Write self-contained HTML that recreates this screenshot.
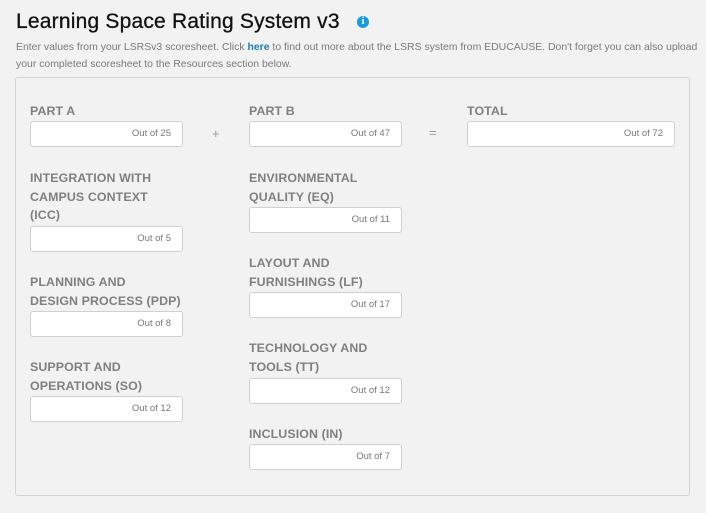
<!DOCTYPE html>
<html><head><meta charset="utf-8"><style>
body{margin:0;width:706px;height:513px;background:#f2f2f2;font-family:"Liberation Sans",sans-serif;position:relative;overflow:hidden}
h1{position:absolute;left:16px;top:10px;margin:0;font-size:21px;font-weight:normal;color:#111;letter-spacing:0.2px;white-space:nowrap;-webkit-text-stroke:0.3px #111}
.info{position:absolute;left:357px;top:16px;width:12px;height:12px;border-radius:50%;background:#1a9be0;color:#fff;font:bold 10px "Liberation Serif",serif;text-align:center;line-height:12px}
.desc{position:absolute;left:16px;top:39px;font-size:10.45px;line-height:17px;color:#7a7a7a;white-space:nowrap}
.desc b{color:#1f7ab8}
.panel{position:absolute;left:15px;top:77px;width:673px;height:417px;border:1px solid #d4d4d4;border-radius:3px}
.l{position:absolute;font-size:12.4px;font-weight:bold;color:#808080;line-height:18.5px;letter-spacing:0.1px;white-space:nowrap}
.i{position:absolute;width:151px;height:24px;background:#fff;border:1px solid #d0d0d0;border-radius:3px;font-size:9.5px;color:#777;text-align:right;line-height:24px;box-sizing:content-box}
.i span{padding-right:11px}
.op{position:absolute;font-size:13px;color:#999}
</style></head><body>
<h1>Learning Space Rating System v3</h1>
<div class="info">i</div>
<div class="desc">Enter values from your LSRSv3 scoresheet. Click <b>here</b> to find out more about the LSRS system from EDUCAUSE. Don't forget you can also upload<br>your completed scoresheet to the Resources section below.</div>
<div class="panel"></div>

<div class="l" style="left:30px;top:102px">PART A</div>
<div class="i" style="left:30px;top:121px"><span>Out of 25</span></div>
<div class="op" style="left:212px;top:126px">+</div>
<div class="l" style="left:249px;top:102px">PART B</div>
<div class="i" style="left:249px;top:121px"><span>Out of 47</span></div>
<div class="op" style="left:429px;top:125px">=</div>
<div class="l" style="left:467px;top:102px">TOTAL</div>
<div class="i" style="left:467px;top:121px;width:206px"><span>Out of 72</span></div>

<div class="l" style="left:30px;top:169px">INTEGRATION WITH<br>CAMPUS CONTEXT<br>(ICC)</div>
<div class="i" style="left:30px;top:226px"><span>Out of 5</span></div>
<div class="l" style="left:30px;top:273px">PLANNING AND<br>DESIGN PROCESS (PDP)</div>
<div class="i" style="left:30px;top:311px"><span>Out of 8</span></div>
<div class="l" style="left:30px;top:358px">SUPPORT AND<br>OPERATIONS (SO)</div>
<div class="i" style="left:30px;top:396px"><span>Out of 12</span></div>

<div class="l" style="left:249px;top:169px">ENVIRONMENTAL<br>QUALITY (EQ)</div>
<div class="i" style="left:249px;top:207px"><span>Out of 11</span></div>
<div class="l" style="left:249px;top:254px">LAYOUT AND<br>FURNISHINGS (LF)</div>
<div class="i" style="left:249px;top:292px"><span>Out of 17</span></div>
<div class="l" style="left:249px;top:339px">TECHNOLOGY AND<br>TOOLS (TT)</div>
<div class="i" style="left:249px;top:378px"><span>Out of 12</span></div>
<div class="l" style="left:249px;top:425px">INCLUSION (IN)</div>
<div class="i" style="left:249px;top:444px"><span>Out of 7</span></div>
</body></html>
